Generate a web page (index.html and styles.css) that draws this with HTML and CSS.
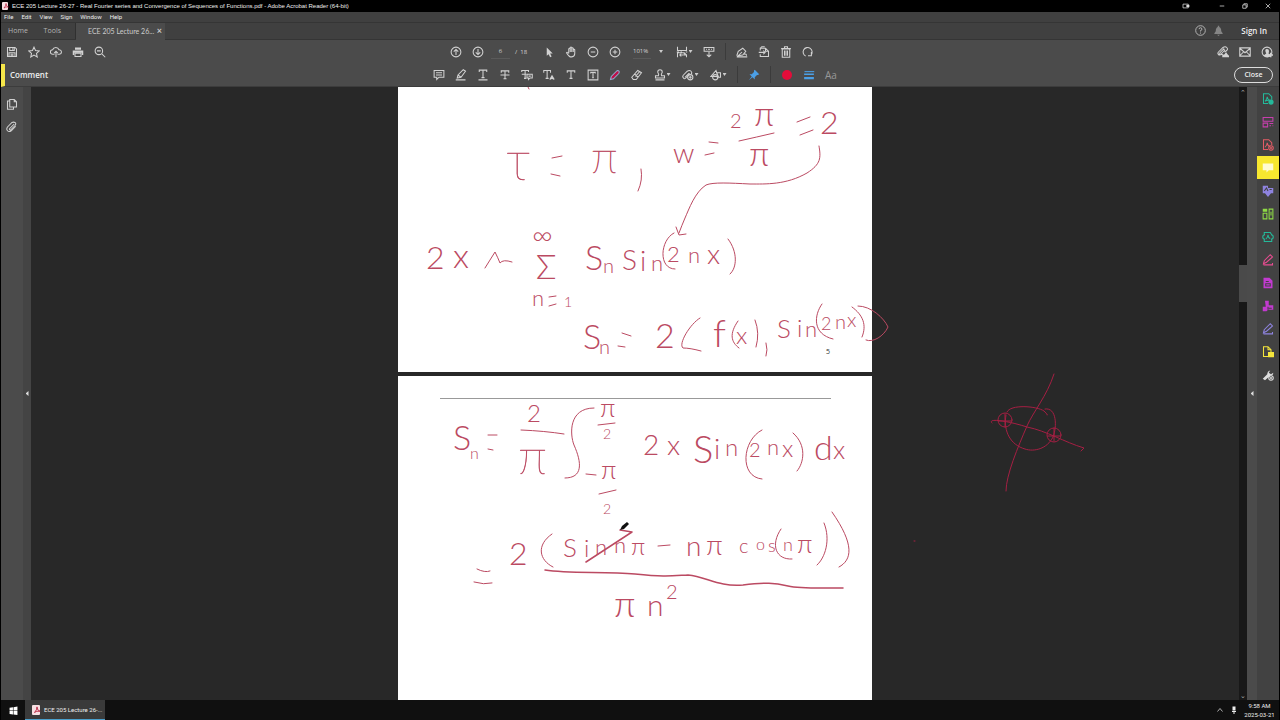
FILE: index.html
```html
<!DOCTYPE html>
<html lang="en">
<head>
<meta charset="utf-8">
<title>ECE 205 Lecture 26-27 - Adobe Acrobat Reader (64-bit)</title>
<link rel="stylesheet" href="styles.css">
</head>
<body>
<svg class="defs" aria-hidden="true">
  <symbol id="save" viewBox="0 0 16 16"><path d="M2 2h10l2 2v10H2zM5 2v4h6V2M9 3v2M4 14V9h8v5M6 11h4M6 13h4"/></symbol>
  <symbol id="star" viewBox="0 0 16 16"><path d="M8 1.500l2 4.500 5 .5-3.700 3.400 1 4.800L8 12.200l-4.300 2.500 1-4.800L1 6.500 6 6z"/></symbol>
  <symbol id="cloud" viewBox="0 0 16 16"><path d="M6 11H3.500a3 3 0 0 1 0-6A4.500 4.500 0 0 1 12 5a3 3 0 0 1 .5 6H10M8 15V7M5.500 9.500L8 7l2.500 2.500"/></symbol>
  <symbol id="print" viewBox="0 0 16 16"><path class="solid" d="M1 6h14v6h-2V9H3v3H1zM4 2h8v3H4z"/><path d="M4 9.500h8V14H4z"/></symbol>
  <symbol id="search" viewBox="0 0 16 16"><circle cx="6.500" cy="6.500" r="5"/><path d="M10.500 10.500L15 15M4 6.500h5"/></symbol>
  <symbol id="up" viewBox="0 0 16 16"><circle cx="8" cy="8" r="6.500"/><path d="M8 12V4.500M5 7.500l3-3 3 3"/></symbol>
  <symbol id="down" viewBox="0 0 16 16"><circle cx="8" cy="8" r="6.500"/><path d="M8 4v7.500M5 8.500l3 3 3-3"/></symbol>
  <symbol id="minus" viewBox="0 0 16 16"><circle cx="8" cy="8" r="6.500"/><path d="M5 8h6"/></symbol>
  <symbol id="plus" viewBox="0 0 16 16"><circle cx="8" cy="8" r="6.500"/><path d="M5 8h6M8 5v6"/></symbol>
  <symbol id="arrow" viewBox="0 0 16 16"><path class="solid" d="M5 2l8 8H9.500l2 4-2 1-2-4L5 13z"/></symbol>
  <symbol id="hand" viewBox="0 0 16 16"><path d="M5 10V4q1-2 2 0V2q1-1.500 2 0v1q1-1.500 2 0v2q1.500-1 2 0v5q0 4-4 4.500H7Q5 14 2 9q1-1.500 3 1M7 4v4M9 3v5M11 4v4"/></symbol>
  <symbol id="fit" viewBox="0 0 16 16"><path d="M2 1v5h12V1M2 15V9h9l3 3v3M11 9v3h3M1 8h3M6 8h2M13 8h2M5 12h5M7 10l-2 2 2 2"/></symbol>
  <symbol id="keys" viewBox="0 0 16 16"><path d="M1.500 2h13v5h-13zM4 4.500h1M7 4.500h2M11 4.500h1M8 8v6M5 11.500l3 3 3-3"/></symbol>
  <symbol id="sign" viewBox="0 0 16 16"><path d="M1 13l2-6 6-4 4 4-4 5-6 1 5-5M1 14.500h14M11 11q3-1 3 2"/></symbol>
  <symbol id="export" viewBox="0 0 16 16"><path d="M3 6V3h7l4 4v7H3v-3M10 3v4h4M1 8.500h8M7 6l2.500 2.500L7 11M3 3l2-2h4"/></symbol>
  <symbol id="trash" viewBox="0 0 16 16"><path d="M3 4h10v11H3zM1.500 3.500h13M6 3V1h4v2M6 6v7M8 6v7M10 6v7"/></symbol>
  <symbol id="redo" viewBox="0 0 16 16"><path d="M5 13.500A6 6 0 1 1 12 12M12.500 8v5H8"/></symbol>
  <symbol id="note" viewBox="0 0 16 16"><path d="M1.500 2h13v9H8l-3 3v-3H1.500zM4 5h8M4 8h8"/></symbol>
  <symbol id="marker" viewBox="0 0 16 16"><path d="M3 12l1-4 7-7 3 2-6 8zM4 8l4 3M1 14.500h13"/></symbol>
  <symbol id="tee" viewBox="0 0 16 16"><path d="M3 5V2.500h10V5M8 2.500V12M6 12.500h4"/></symbol>
  <symbol id="underline" viewBox="0 0 16 16"><path d="M3 4V1.500h10V4M8 1.500V11M6 11.500h4M2 14.500h12"/></symbol>
  <symbol id="strike" viewBox="0 0 16 16"><path d="M3 5V2.500h10V5M8 2.500V13M6 13h4M2 8h12"/></symbol>
  <symbol id="replace" viewBox="0 0 16 16"><path d="M1 4V2h9v2M5.500 2v10M4 12.500h3M1 7h6M8 7h7v5h-3l-2 2v-2H8zM10 9.500h3"/></symbol>
  <symbol id="insert" viewBox="0 0 16 16"><path d="M1 5V2h9v3M5.500 2v10M3.500 12.500h4M9 14l3-5 3 5M10 14l2-3 2 3"/></symbol>
  <symbol id="textbox" viewBox="0 0 16 16"><path d="M1.500 1.500h13v13h-13zM5 6V4.500h6V6M8 4.500V11M7 11.500h2"/></symbol>
  <symbol id="eraser" viewBox="0 0 16 16"><path d="M1 11l8-9 5 3-7 9H3zM5 7l5 4M6 10l5-6"/></symbol>
  <symbol id="stamp" viewBox="0 0 16 16"><path d="M6 9c1-3-1-3-1-5a3 3 0 0 1 6 0c0 2-2 2-1 5h4v3H2V9zM2 14.500h12"/></symbol>
  <symbol id="clipadd" viewBox="0 0 16 16"><path d="M2 12q-2-2 0-4l5-5q3-2 5 0t0 4M4 11l5-5q1 0 1 1l-5 5q-2 2-3 0"/><circle cx="11" cy="11" r="3.500"/><path d="M9 11h4M11 9v4"/></symbol>
  <symbol id="shapes" viewBox="0 0 16 16"><path d="M1 10l7-8 3 8zM8 5h6v6H9"/><circle cx="7" cy="11" r="3.500"/></symbol>
  <symbol id="pin" viewBox="0 0 16 16"><path class="solid" d="M9 1l6 6-2 1-1 0-3 3v3l-3-3-5 4 4-5-3-3h3l3-3V2z"/></symbol>
  <symbol id="pages" viewBox="0 0 16 16"><path d="M5 2h6l3 3v7H5zM11 2v3h3M5 4H2v11h8v-3"/></symbol>
  <symbol id="clip" viewBox="0 0 16 16"><path d="M11 4l-6 6q-1 2 1 2l6-6q2-3 0-4t-4 0L2 8q-2 3 0 5t5 0l6-6"/></symbol>
  <symbol id="help" viewBox="0 0 16 16"><circle cx="8" cy="8" r="7"/><path d="M6 6q0-2 2-2t2 2-2 2v1.500M8 11v1.500"/></symbol>
  <symbol id="bell" viewBox="0 0 16 16"><path class="solid" d="M7 1h2v2q3 1 3 6l2 3v1H2v-1l2-3q0-5 3-6zM6 14h4l-2 2z"/></symbol>
  <symbol id="linkup" viewBox="0 0 16 16"><path d="M3 12q-3-2-1-4l6-6q3-2 5 0t0 4l-3 2M5 11l5-5-1-2-5 5-1 3 5-1"/><path class="solid" d="M7 15v-3l3-1 2-3 2 3 2 2v2z"/></symbol>
  <symbol id="mail" viewBox="0 0 16 16"><path d="M1 2.500h14v11H1zM1 3l7 6 7-6M1 13l5-5M15 13l-5-5"/></symbol>
  <symbol id="user" viewBox="0 0 16 16"><circle cx="8" cy="8" r="6.500"/><path class="solid" d="M3 13l4-3q-3-6 1-6t2 6l4 2-1 2-4 1zM12 9h2v2h2v2h-2v2h-2z"/></symbol>
  <symbol id="pdfout" viewBox="0 0 16 16"><path d="M8 14H2V1h7l4 4v4M4 11q3-3 3-6 0 4 4 5-4-1-7 1"/><circle class="solid" cx="12" cy="12" r="3.500"/></symbol>
  <symbol id="organize" viewBox="0 0 16 16"><path d="M1.500 2h13v5h-13zM1.500 9.500h6v5h-6zM10 10h5M10 13h2M14 13h1"/></symbol>
  <symbol id="pdfadd" viewBox="0 0 16 16"><path d="M8 14H2V1h7l4 4v3M4 11q3-3 3-6 0 4 4 5"/><circle cx="12" cy="12" r="3"/><path d="M10.500 12h3M12 10.500v3"/></symbol>
  <symbol id="notefill" viewBox="0 0 16 16"><path class="solid" d="M1 2h14v9H9l-3 3v-3H1z"/></symbol>
  <symbol id="combine" viewBox="0 0 16 16"><path class="solid" d="M1 1h7v3h7v7h-3l-4 5-4-5H1z"/><path class="cut" d="M3 8l3-4 2 4M10 6h3"/></symbol>
  <symbol id="layout" viewBox="0 0 16 16"><path d="M9.500 1.500h5v13h-5zM1.500 7h5v7.500h-5zM12 5v5"/><path class="solid" d="M1 1h6v4H1z"/></symbol>
  <symbol id="compress" viewBox="0 0 16 16"><path d="M3 5V2h8l2 3M3 11v3h10v-3M1 8a3 3 0 0 1 3-3M15 8a3 3 0 0 0-3-3M1 8q0 3 3 3M15 8q0 3-3 3M5 11q3-3 3-6 0 4 3 5"/></symbol>
  <symbol id="pen" viewBox="0 0 16 16"><path d="M2 13l1-4 8-8 3 3-8 7zM2 14.500h12V12"/></symbol>
  <symbol id="protect" viewBox="0 0 16 16"><path class="solid" d="M2 1h8l4 4v10H2z"/><path class="cut" d="M5 9h6v3H5zM5 6h4"/></symbol>
  <symbol id="stamper" viewBox="0 0 16 16"><path class="solid" d="M4 1h5v6h6v6H8l-2 2H1V9h4z"/><path class="cut" d="M9 11h4M8 9v4"/></symbol>
  <symbol id="lockdoc" viewBox="0 0 16 16"><path d="M8 14H2V1h6l4 4v3M8 1v4h4"/><path class="solid" d="M8 8h8v7H8z"/></symbol>
  <symbol id="wrench" viewBox="0 0 16 16"><path class="solid" d="M1 13l6-6q0-4 4-5L9 5l3 2 3-2q0 4-4 4l-7 6z"/><circle cx="12" cy="12" r="3"/><path d="M12 10.500v3M10.500 12h3"/></symbol>
</svg>

<header class="titlebar">
  <span class="pdf-logo"><svg viewBox="0 0 16 16"><path d="M4 12q4-4 4-9 0 6 5 7-6-1-9 2"/></svg></span>
  <span class="title">ECE 205 Lecture 26-27 - Real Fourier series and Convergence of Sequences of Functions.pdf - Adobe Acrobat Reader (64-bit)</span>
  <div class="window-buttons">
    <button aria-label="Share window"><svg viewBox="0 0 16 16"><path d="M0 3h14v10H0z"/><path class="solid" d="M9 5h8v6H9z"/></svg></button>
    <button class="first" aria-label="Minimize"><svg viewBox="0 0 16 16"><path d="M2 8h12"/></svg></button>
    <button aria-label="Restore"><svg viewBox="0 0 16 16"><path d="M2 5h9v9H2zM5 5V2h9v9h-3"/></svg></button>
    <button aria-label="Close window"><svg viewBox="0 0 16 16"><path d="M2 2l12 12M14 2L2 14"/></svg></button>
  </div>
</header>

<nav class="menubar" aria-label="Menu">
  <button>File</button><button>Edit</button><button>View</button><button>Sign</button><button>Window</button><button>Help</button>
</nav>

<div class="tabs">
  <button class="tab home">Home</button>
  <button class="tab tools">Tools</button>
  <div class="tab active"><span>ECE 205 Lecture 26...</span><button aria-label="Close tab">×</button></div>
  <div class="account">
    <button aria-label="Help"><svg class="icon"><use href="#help"/></svg></button>
    <button class="dim" aria-label="Notifications"><svg class="icon"><use href="#bell"/></svg></button>
    <button class="signin">Sign In</button>
  </div>
</div>

<div class="toolbar">
  <div class="group">
    <button aria-label="Save"><svg class="icon"><use href="#save"/></svg></button>
    <button aria-label="Star"><svg class="icon"><use href="#star"/></svg></button>
    <button aria-label="Upload"><svg class="icon"><use href="#cloud"/></svg></button>
    <button aria-label="Print"><svg class="icon"><use href="#print"/></svg></button>
    <button aria-label="Find"><svg class="icon"><use href="#search"/></svg></button>
  </div>
  <div class="group middle">
    <button aria-label="Previous page"><svg class="icon"><use href="#up"/></svg></button>
    <button aria-label="Next page"><svg class="icon"><use href="#down"/></svg></button>
    <input class="page-number" aria-label="Page number" value="6">
    <span class="page-total">/&nbsp; 18</span>
    <button aria-label="Select"><svg class="icon"><use href="#arrow"/></svg></button>
    <button aria-label="Pan"><svg class="icon"><use href="#hand"/></svg></button>
    <button aria-label="Zoom out"><svg class="icon"><use href="#minus"/></svg></button>
    <button aria-label="Zoom in"><svg class="icon"><use href="#plus"/></svg></button>
    <span class="zoom"><select aria-label="Zoom level"><option>101%</option></select><i class="caret"></i></span>
    <button class="wide" aria-label="Fit page"><svg class="icon"><use href="#fit"/></svg><i class="caret"></i></button>
    <button aria-label="Keyboard"><svg class="icon"><use href="#keys"/></svg></button>
    <i class="separator"></i>
    <button aria-label="Sign document"><svg class="icon"><use href="#sign"/></svg></button>
    <button aria-label="Export"><svg class="icon"><use href="#export"/></svg></button>
    <button aria-label="Delete"><svg class="icon"><use href="#trash"/></svg></button>
    <button aria-label="Redo"><svg class="icon"><use href="#redo"/></svg></button>
  </div>
  <div class="group end">
    <button aria-label="Share link"><svg class="icon"><use href="#linkup"/></svg></button>
    <button aria-label="Email"><svg class="icon"><use href="#mail"/></svg></button>
    <button aria-label="Add people"><svg class="icon"><use href="#user"/></svg></button>
  </div>
</div>

<div class="toolbar comment">
  <h1>Comment</h1>
  <div class="group middle">
    <button aria-label="Sticky note"><svg class="icon"><use href="#note"/></svg></button>
    <button aria-label="Highlight"><svg class="icon"><use href="#marker"/></svg></button>
    <button aria-label="Underline"><svg class="icon"><use href="#underline"/></svg></button>
    <button aria-label="Strikethrough"><svg class="icon"><use href="#strike"/></svg></button>
    <button aria-label="Replace text"><svg class="icon"><use href="#replace"/></svg></button>
    <button aria-label="Insert text"><svg class="icon"><use href="#insert"/></svg></button>
    <button aria-label="Text comment"><svg class="icon"><use href="#tee"/></svg></button>
    <button aria-label="Text box"><svg class="icon"><use href="#textbox"/></svg></button>
    <button aria-label="Pencil"><svg class="icon" viewBox="0 0 16 16"><path class="pencil-fill" d="M2 14l1-4 8-8q4 0 2 4l-7 7z"/></svg></button>
    <button aria-label="Eraser"><svg class="icon"><use href="#eraser"/></svg></button>
    <button class="wide" aria-label="Stamp"><svg class="icon"><use href="#stamp"/></svg><i class="caret"></i></button>
    <button class="wide" aria-label="Attach"><svg class="icon"><use href="#clipadd"/></svg><i class="caret"></i></button>
    <button class="wide" aria-label="Shapes"><svg class="icon"><use href="#shapes"/></svg><i class="caret"></i></button>
    <i class="separator"></i>
    <button class="blue" aria-label="Keep tool selected"><svg class="icon"><use href="#pin"/></svg></button>
    <i class="separator"></i>
    <button aria-label="Colour"><i class="swatch"></i></button>
    <button class="blue" aria-label="Line thickness"><svg class="icon" viewBox="0 0 16 16"><path d="M2 3.500h13"/><path class="solid" d="M1.500 6h13v2h-13zM1.500 10.500h13v3h-13z"/></svg></button>
    <button class="text-style" aria-label="Text properties">Aa</button>
  </div>
  <div class="group end"><button class="close">Close</button></div>
</div>

<main class="workspace">
  <aside class="left-rail">
    <button aria-label="Page thumbnails"><svg class="icon"><use href="#pages"/></svg></button>
    <button aria-label="Attachments"><svg class="icon"><use href="#clip"/></svg></button>
  </aside>
  <button class="splitter" aria-label="Expand left panel"><i></i></button>

  <section class="viewer" aria-label="Document">
    <div class="document">
      <article class="sheet first-sheet"><span>5</span></article>
      <article class="sheet second-sheet"><hr></article>
      <svg class="ink" viewBox="398 87 474 613">
        <g class="writing">
          <g class="large"><text x="506" y="180" font-size="56">τ</text><text x="591" y="173" font-size="46">π</text><text x="518" y="474" font-size="50">π</text></g>
          <text x="673" y="163" font-size="28">w</text>
          <text x="730" y="128" font-size="20">2</text><text x="754" y="126" font-size="34">π</text><text x="749" y="166" font-size="34">π</text><text x="820" y="134" font-size="32">2</text>
          <text x="426" y="269" font-size="32">2</text><text x="453" y="268" font-size="34">x</text>
          <text x="532" y="245" font-size="28">∞</text><text x="536" y="279" font-size="34">Σ</text>
          <text x="532" y="306" font-size="22">n</text><text x="564" y="307" font-size="14">1</text>
          <text x="585" y="270" font-size="34">S</text><text x="603" y="273" font-size="20">n</text><text x="622" y="270" font-size="28">S</text>
          <text x="640" y="271" font-size="28">i</text><text x="651" y="271" font-size="22">n</text>
          <text x="667" y="262" font-size="22">2</text><text x="688" y="263" font-size="22">n</text><text x="707" y="264" font-size="28">x</text>
          <text x="583" y="349" font-size="34">S</text><text x="599" y="354" font-size="20">n</text>
          <text x="655" y="348" font-size="34">2</text><text x="713" y="347" font-size="38">f</text><text x="736" y="344" font-size="24">x</text>
          <text x="777" y="338" font-size="26">S</text><text x="797" y="337" font-size="24">i</text><text x="805" y="337" font-size="22">n</text>
          <text x="821" y="330" font-size="18">2</text><text x="835" y="329" font-size="20">n</text><text x="847" y="327" font-size="20">x</text>
          <text x="453" y="450" font-size="34">S</text><text x="470" y="459" font-size="16">n</text>
          <text x="527" y="422" font-size="24">2</text>
          <text x="600" y="417" font-size="26">π</text><text x="603" y="439" font-size="14">2</text>
          <text x="601" y="479" font-size="26">π</text><text x="603" y="514" font-size="14">2</text>
          <text x="643" y="455" font-size="28">2</text><text x="667" y="455" font-size="28">x</text><text x="693" y="463" font-size="38">S</text>
          <text x="714" y="459" font-size="28">i</text><text x="725" y="456" font-size="24">n</text><text x="749" y="457" font-size="20">2</text>
          <text x="767" y="455" font-size="22">n</text><text x="782" y="457" font-size="24">x</text><text x="814" y="460" font-size="34">d</text><text x="833" y="459" font-size="26">x</text>
          <text x="509" y="565" font-size="32">2</text><text x="563" y="557" font-size="26">S</text><text x="584" y="557" font-size="24">i</text>
          <text x="595" y="555" font-size="22">n</text><text x="614" y="553" font-size="22">n</text><text x="631" y="555" font-size="24">π</text>
          <text x="686" y="556" font-size="28">n</text><text x="706" y="555" font-size="28">π</text>
          <text x="739" y="553" font-size="20">c</text><text x="756" y="550" font-size="16">o</text><text x="768" y="552" font-size="18">s</text>
          <text x="783" y="551" font-size="18">n</text><text x="797" y="553" font-size="26">π</text>
          <text x="614" y="617" font-size="36">π</text><text x="647" y="616" font-size="30">n</text><text x="666" y="599" font-size="20">2</text>
        </g>
        <path d="M528 87l1 2M552 158l10-2M551 174l9 2M641 169Q643 180 638 191M709 142l9 1M705 155l9-2M739 141Q757 137 774 133M797 122l13-5M800 135l13-5"/>
        <path d="M819 146C821 158 821 164 807 173C786 185 766 184 750 184C730 183 713 182 706 185C695 192 689 209 685 218Q682 225 679 233M676 227L679 235L686 234"/>
        <path d="M485 268Q490 260 495 252Q498 258 500 263Q503 259 512 262M549 297l7-1M549 306l7-2M674 233C660 240 658 269 675 269M728 239C738 252 737 268 730 274"/>
        <path d="M622 333l9 3M618 346l7 1M700 318C690 324 678 344 683 348Q690 348 701 351M738 321C729 334 731 342 739 348M755 320Q760 333 756 347M766 343Q768 350 766 356M822 304C814 315 812 334 833 339M852 307C863 315 867 325 862 337"/>
        <path d="M858 306C871 306 884 318 888 327C884 336 873 343 866 340"/>
        <path d="M488 435h9M488 449l5 1M521 430Q545 431 564 434M594 408C568 408 570 435 574 445C582 463 583 478 565 478M598 425l17-2M586 474l10 1M599 494l17-4M762 430C742 440 739 477 762 479M793 433C807 445 804 463 797 471"/>
        <path d="M477 569q8 4 13 2M474 582q10 3 18 1M552 534C536 545 539 560 553 567M658 546l12-1M781 529C770 545 776 560 792 559M824 523C831 540 825 558 817 565M832 512C855 545 852 560 839 567"/>
        <path class="bold" d="M545 570C570 574 605 571 635 574S670 576 688 575C707 577 718 587 743 585C765 582 775 583 788 586S820 588 843 588M586 562L632 532L620 530"/>
        <g class="doodle">
          <path d="M1054 374C1047 396 1033 412 1027 426C1018 447 1006 475 1006 491M992 423C986 417 1012 422 1027 427C1047 431 1064 442 1084 448L1081 451M1007 412C1010 404 1037 406 1044 411Q1049 416 1047 415M1045 409C1057 407 1057 427 1053 437C1047 449 1034 452 1025 449C1011 445 1003 432 1006 415M914 541h1"/>
          <circle cx="1005" cy="420" r="7"/><circle cx="1054" cy="435" r="7"/>
          <path d="M1005 414v13M999 421h12M1054 428v13M1048 436h12"/>
        </g>
        <path class="pointer" d="M620 530l2-4 5-4 2 2-5 5z"/>
      </svg>
    </div>
  </section>
  <div class="scrollbar"><span>⌃</span><i></i><span>⌄</span></div>
  <button class="splitter right" aria-label="Collapse right panel"><i></i></button>
  <aside class="right-rail">
    <button class="teal" aria-label="Export PDF"><svg class="icon"><use href="#pdfout"/></svg></button>
    <button class="magenta" aria-label="Edit PDF"><svg class="icon"><use href="#organize"/></svg></button>
    <button class="red" aria-label="Create PDF"><svg class="icon"><use href="#pdfadd"/></svg></button>
    <button class="selected" aria-label="Comment"><svg class="icon"><use href="#notefill"/></svg></button>
    <button class="violet" aria-label="Combine files"><svg class="icon"><use href="#combine"/></svg></button>
    <button class="lime" aria-label="Organize pages"><svg class="icon"><use href="#layout"/></svg></button>
    <button class="teal" aria-label="Compress PDF"><svg class="icon"><use href="#compress"/></svg></button>
    <button class="pink" aria-label="Redact"><svg class="icon"><use href="#pen"/></svg></button>
    <button class="purple" aria-label="Protect"><svg class="icon"><use href="#protect"/></svg></button>
    <button class="purple" aria-label="Stamp files"><svg class="icon"><use href="#stamper"/></svg></button>
    <button class="violet" aria-label="Fill and sign"><svg class="icon"><use href="#pen"/></svg></button>
    <button class="yellow" aria-label="Send for comments"><svg class="icon"><use href="#lockdoc"/></svg></button>
    <button aria-label="More tools"><svg class="icon"><use href="#wrench"/></svg></button>
  </aside>
</main>

<footer class="taskbar">
  <button class="start" aria-label="Start"><svg viewBox="0 0 16 16"><path d="M1 3l6-1v6H1zM8 2l7-1v7H8zM1 9h6v6l-6-1zM8 9h7v7l-7-1z"/></svg></button>
  <button class="task"><span class="pdf-logo"><svg viewBox="0 0 16 16"><path d="M4 12q4-4 4-9 0 6 5 7-6-1-9 2"/></svg></span>ECE 205 Lecture 26-...</button>
  <div class="tray">
    <svg viewBox="0 0 16 16"><path d="M3 11l5-6 5 6"/></svg>
    <svg viewBox="0 0 16 16"><path class="solid" d="M5 1h6v8H5zM4 10h8v2H9v4H7v-4H4z"/></svg>
    <div class="clock"><span>9:58 AM</span><span>2025-03-21</span></div>
  </div>
</footer>
</body>
</html>
```

FILE: styles.css
```css
* { box-sizing: border-box; }
body {
  margin: 0;
  height: 100vh;
  display: flex;
  flex-direction: column;
  overflow: hidden;
  background: #000;
  border: solid #000;
  border-width: 0 1px;
  color: #ddd;
  font: 7px "Open Sans", "Noto Sans", sans-serif;
}
button, input, select {
  margin: 0; padding: 0; border: 0;
  background: none; color: inherit; font: inherit;
  appearance: none;
}
button { display: flex; align-items: center; justify-content: center; }
svg { fill: none; stroke: currentColor; stroke-width: 1.4; overflow: visible; }
.defs { position: absolute; width: 0; height: 0; }
.solid { fill: currentColor; stroke: none; }
.cut { stroke: #424242; }
.icon { width: 12px; height: 12px; flex: none; }

.titlebar { height: 12px; display: flex; align-items: center; gap: 4px; padding-left: 1px; flex: none; }
.title { color: #eee; white-space: nowrap; line-height: 12px; font-family: "Liberation Sans", sans-serif; font-size: 6px; }
.pdf-logo { width: 6px; height: 8px; display: flex; background: #f6dfe2; color: #b51f3d; border-radius: 1px; flex: none; }
.window-buttons { margin-left: auto; display: flex; }
.window-buttons button { width: 23px; }
.window-buttons .first { margin-left: 13px; }
.window-buttons svg { width: 6px; height: 6px; stroke-width: 2; }

.menubar { height: 10px; flex: none; background: #404040; display: flex; align-items: center; gap: 8px; padding: 0 0 2px 3px; font-family: Roboto, sans-serif; font-size: 6px; color: #eee; }

.tabs { height: 18px; flex: none; display: flex; background: #404040; border-top: 1px solid #353535; border-bottom: 1px solid #353535; color: #b4b4b4; }
.home { width: 34px; }
.tools { width: 41px; border-right: 1px solid #303030; padding-right: 14px; justify-content: flex-end; }
.home, .tools { font-size: 7px; }
.tab { padding-bottom: 2px; }
.tab.active { width: 89px; margin-bottom: -1px; display: flex; align-items: center; justify-content: space-between; padding: 0 3px 2px 12px; background: #4b4b4b; color: #ccc; white-space: nowrap; font-family: Lato, sans-serif; }
.tab.active button { font-size: 9px; font-weight: 700; }
.account { margin-left: auto; display: flex; align-items: center; padding: 0 12px 2px 0; }
.account button { width: 18px; }
.account .icon { width: 11px; height: 11px; }
.account .dim { color: #858585; }
.account .signin { width: auto; margin-left: 14px; font-size: 8px; font-weight: 600; color: #eee; }

.toolbar { height: 24px; flex: none; display: grid; grid-template-columns: 1fr auto 1fr; align-items: center; background: #4b4b4b; color: #d2d2d2; padding-bottom: 1px; }
.group { display: flex; align-items: center; }
.group button { width: 22px; height: 20px; }
.middle { padding-right: 16px; }
.comment .middle { padding-right: 14px; }
.end { justify-content: flex-end; padding-right: 1px; }
.page-number { width: 19px; height: 14px; margin: 0 3px 0 2px; text-align: center; border-bottom: 1px solid #5a5a5a; font-size: 6px; }
.page-total { width: 25px; padding-left: 2px; font-size: 6px; }
.zoom { width: 44px; display: flex; align-items: center; justify-content: center; gap: 8px; }
.zoom select { width: 18px; height: 14px; border-bottom: 1px solid #5a5a5a; font-size: 6px; }
.caret { width: 4px; height: 3px; flex: none; background: #ccc; clip-path: polygon(0 0, 100% 0, 50% 100%); }
.group .wide { width: 28px; gap: 1px; }
.separator { width: 1px; height: 17px; margin: 0 5px; background: #3b3b3b; }
.comment { height: 23px; border-left: 4px solid #f5e64a; border-bottom: 1px solid #3c3c3c; }
.comment h1 { margin: 0; padding-left: 5px; font-size: 8px; line-height: 10px; font-weight: 600; color: #eee; }
.comment .blue { color: #4b9fe6; }
.pencil-fill { fill: #c00e47; stroke: #8fa8cc; }
.swatch { width: 10px; height: 10px; border-radius: 50%; background: #e50c3a; }
.group .text-style { color: #989898; font-size: 10px; }
.group .close { width: 39px; height: 16px; margin-right: 5px; border: 1px solid #ddd; border-radius: 8px; font-size: 7px; font-weight: 600; color: #eee; }

.workspace { flex: 1; min-height: 0; display: flex; background: #282828; }
.left-rail { width: 22px; background: #4b4b4b; padding-top: 5px; display: flex; flex-direction: column; color: #d0d0d0; }
.left-rail button { height: 23px; }
.splitter { width: 8px; background: #444; }
.splitter i { width: 3px; height: 5px; background: #ddd; clip-path: polygon(0 50%, 100% 0, 100% 100%); }
.viewer { flex: 1; min-width: 0; overflow: hidden; display: flex; justify-content: center; }
.document { width: 474px; position: relative; flex: none; display: flex; flex-direction: column; gap: 4px; }
.sheet { background: #fff; }
.first-sheet { height: 285px; display: flex; align-items: flex-end; padding: 0 0 16px 428px; color: #333; font-size: 7px; }
.first-sheet span { line-height: 9px; }
.second-sheet { flex: 1; padding: 22px 41px 0 42px; }
.second-sheet hr { margin: 0; border: 0; border-top: 1px solid #999; }
.ink { position: absolute; top: 0; left: 0; width: 474px; height: 613px; color: #bb4a62; stroke-width: 1; stroke-linecap: round; stroke-linejoin: round; }
.writing { fill: currentColor; stroke: none; font-family: Lato, "Open Sans", sans-serif; font-weight: 300; }
.large { font-weight: 100; stroke: currentColor; stroke-width: 0.5; }
.bold { stroke-width: 1.5; }
.doodle { stroke: #a51f43; }
.pointer { fill: #111; stroke: none; }

.scrollbar { width: 8px; background: #181818; display: flex; flex-direction: column; align-items: center; color: #aaa; }
.scrollbar span { height: 10px; line-height: 12px; font-size: 7px; }
.scrollbar i { width: 8px; height: 37px; margin-top: 168px; margin-bottom: auto; background: #4a4a4a; }
.right { width: 10px; background: #4b4b4b; }
.right-rail { width: 22px; background: #424242; display: flex; flex-direction: column; color: #ddd; }
.right-rail button { height: 23px; }
.right-rail .teal { color: #24b99a; }
.right-rail .magenta { color: #c83fae; }
.right-rail .red { color: #e35c66; }
.right-rail .violet { color: #8e83df; }
.right-rail .lime { color: #8fdb45; }
.right-rail .pink { color: #e84c91; }
.right-rail .purple { color: #c23ad0; }
.right-rail .yellow { color: #f4e53c; }
.right-rail .selected { background: #f7e72f; color: #fffbd2; }

.taskbar { height: 20px; flex: none; display: flex; background: #101010; color: #eee; font-family: Roboto, sans-serif; font-size: 6px; }
.start { width: 24px; }
.start svg { width: 9px; height: 9px; fill: #fff; stroke: none; }
.task { width: 80px; gap: 4px; justify-content: flex-start; padding-left: 7px; background: #3a3a3a; border-bottom: 1px solid #4b9fcb; white-space: nowrap; }
.task .pdf-logo { width: 8px; height: 10px; }
.tray { margin-left: auto; display: flex; align-items: center; gap: 6px; padding-right: 4px; }
.tray svg { width: 8px; height: 8px; }
.clock { display: flex; flex-direction: column; align-items: center; min-width: 31px; line-height: 9px; white-space: nowrap; }
```
